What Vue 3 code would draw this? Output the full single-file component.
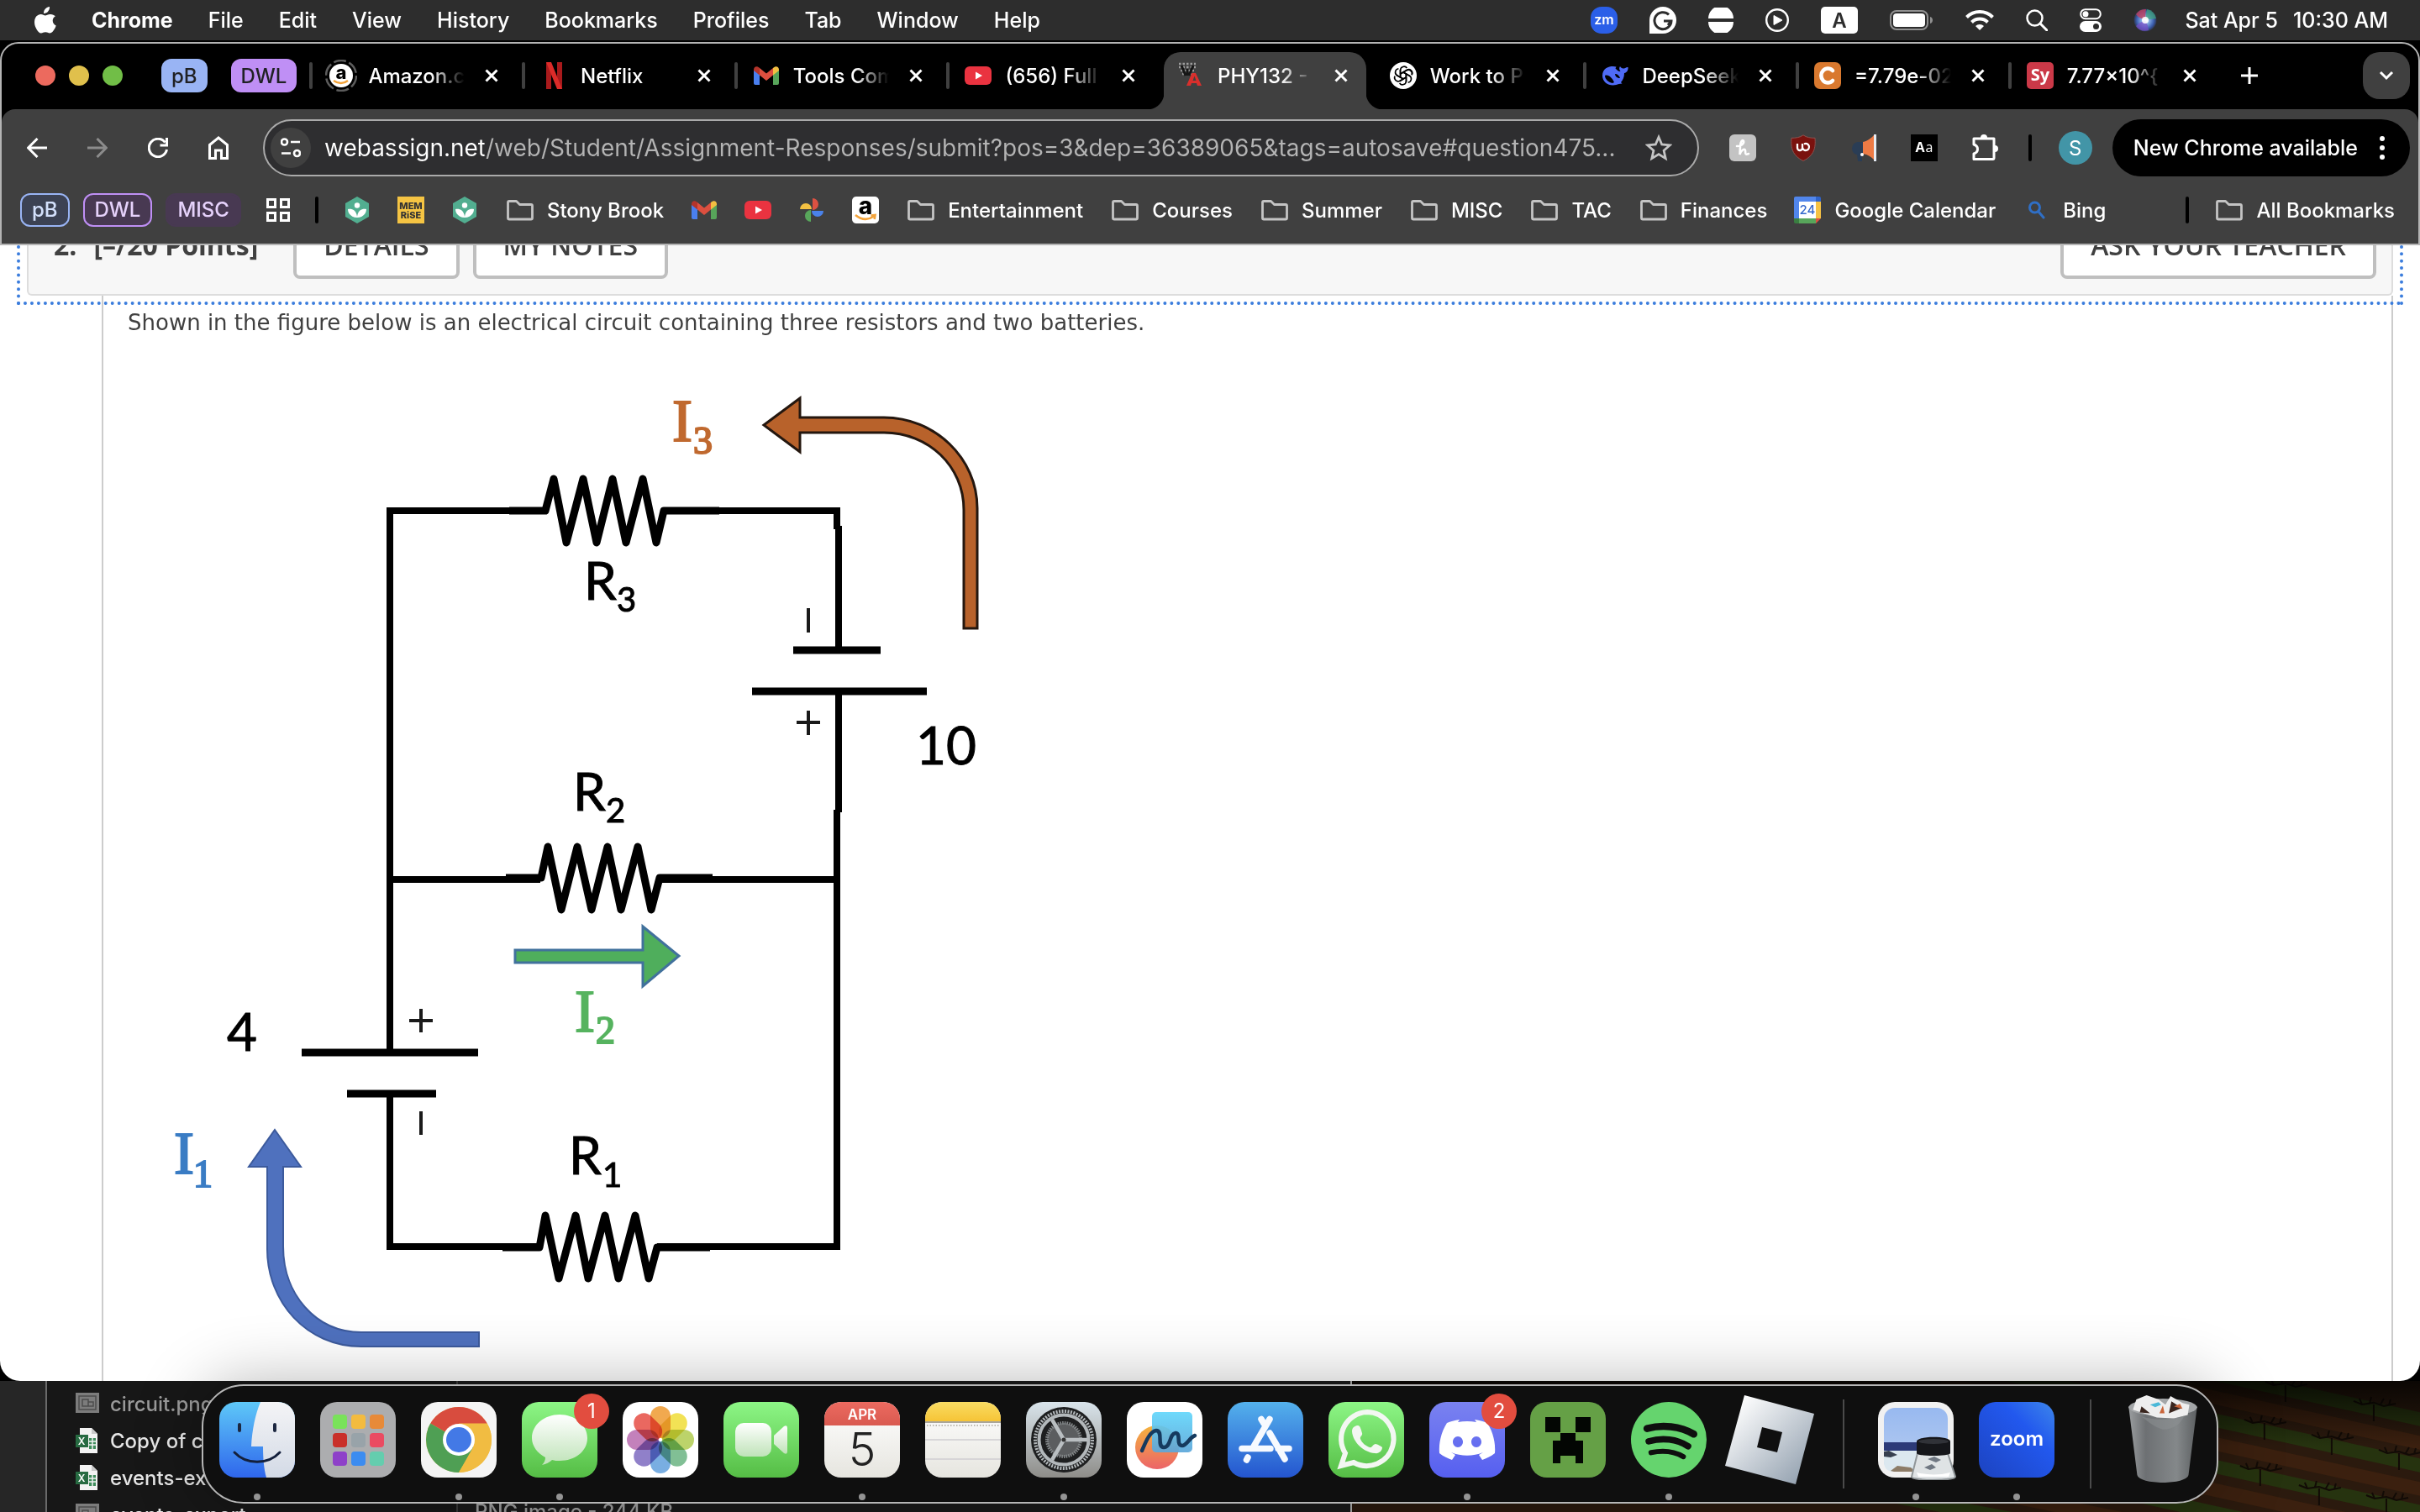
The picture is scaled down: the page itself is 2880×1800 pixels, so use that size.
<template>
  <div class="desktop">
    <!-- gradients used by the icons -->
    <svg class="gradients" aria-hidden="true">
      <defs>
        <linearGradient id="g-finder" x1="0" y1="0" x2="0" y2="1"><stop offset="0" stop-color="#5ec8f8" /><stop offset="1" stop-color="#2f66ec" /></linearGradient>
        <linearGradient id="g-face" x1="0" y1="0" x2="0" y2="1"><stop offset="0" stop-color="#f4f4f6" /><stop offset="1" stop-color="#d3dae6" /></linearGradient>
        <linearGradient id="g-green" x1="0" y1="0" x2="0" y2="1"><stop offset="0" stop-color="#8df686" /><stop offset="1" stop-color="#55bd45" /></linearGradient>
        <linearGradient id="g-bubble" x1="0" y1="0" x2="0" y2="1"><stop offset="0" stop-color="#ffffff" /><stop offset="1" stop-color="#bfe3b8" /></linearGradient>
        <linearGradient id="g-red" x1="0" y1="0" x2="0" y2="1"><stop offset="0" stop-color="#ec6a60" /><stop offset="1" stop-color="#d95a50" /></linearGradient>
        <linearGradient id="g-yellow" x1="0" y1="0" x2="0" y2="1"><stop offset="0" stop-color="#f9dc63" /><stop offset="1" stop-color="#f6c436" /></linearGradient>
        <linearGradient id="g-paper" x1="0" y1="0" x2="0" y2="1"><stop offset="0" stop-color="#ffffff" /><stop offset="1" stop-color="#e6e5df" /></linearGradient>
        <linearGradient id="g-steel" x1="0" y1="0" x2="0" y2="1"><stop offset="0" stop-color="#d9e4eb" /><stop offset="1" stop-color="#8e8d89" /></linearGradient>
        <linearGradient id="g-store" x1="0" y1="0" x2="0" y2="1"><stop offset="0" stop-color="#54b1ec" /><stop offset="1" stop-color="#2455cf" /></linearGradient>
        <linearGradient id="g-discord" x1="0" y1="0" x2="0" y2="1"><stop offset="0" stop-color="#7a82f0" /><stop offset="1" stop-color="#565ff0" /></linearGradient>
        <linearGradient id="g-free" x1="0" y1="0" x2="0" y2="1"><stop offset="0" stop-color="#f4b33e" /><stop offset="1" stop-color="#ec6468" /></linearGradient>
        <linearGradient id="g-sheet" x1="0" y1="0" x2="0" y2="1"><stop offset="0" stop-color="#62d6fb" /><stop offset="1" stop-color="#5ba6d9" /></linearGradient>
        <linearGradient id="g-roblox" x1="0" y1="0" x2="1" y2="1"><stop offset="0.1" stop-color="#ffffff" /><stop offset="1" stop-color="#8998a8" /></linearGradient>
        <linearGradient id="g-zoom" x1="1" y1="0" x2="0" y2="1"><stop offset="0" stop-color="#3d86ea" /><stop offset="0.35" stop-color="#2258ee" /><stop offset="1" stop-color="#1c43c0" /></linearGradient>
        <linearGradient id="g-sky" x1="0" y1="0" x2="0" y2="1"><stop offset="0" stop-color="#98b9f0" /><stop offset="1" stop-color="#b7cdf0" /></linearGradient>
        <linearGradient id="g-can" x1="0" y1="0" x2="1" y2="0"><stop offset="0" stop-color="#9a9d9f" /><stop offset="0.25" stop-color="#6d7073" /><stop offset="0.7" stop-color="#84888a" /><stop offset="1" stop-color="#5d6062" /></linearGradient>
        <linearGradient id="g-dusk" x1="0" y1="0" x2="0" y2="1"><stop offset="0" stop-color="#000" stop-opacity=".75" /><stop offset="0.5" stop-color="#000" stop-opacity="0" /></linearGradient>
        <radialGradient id="g-siri"><stop offset="0" stop-color="#ffffff" /><stop offset="0.3" stop-color="#8fb6e8" /><stop offset="0.75" stop-color="#3c5fb0" /><stop offset="1" stop-color="#2d3550" /></radialGradient>
      </defs>
    </svg>

    <!-- shared icon shapes -->
    <svg class="sprite" aria-hidden="true">
      <!-- menu bar -->
      <symbol id="i-apple" viewBox="0 0 26 32">
        <path fill="#fff" d="M18 0c.3 2.200-.6 4.200-1.900 5.700-1.300 1.400-3.200 2.400-5 2.200-.3-2.100.7-4.200 1.900-5.500C14.300 1 16.400.1 18 0zM24.900 11.200c-2 1.200-3.200 3-3.200 5.300 0 2.700 1.600 4.900 4 5.900-.6 1.800-1.400 3.500-2.500 5.100-1.300 1.900-2.700 3.900-4.900 3.900-2.100 0-2.700-1.200-5.200-1.200s-3.200 1.200-5.200 1.200c-2.100 0-3.600-2.100-5-4C1 24.500-.3 20.900.1 17.200.5 12.600 3.500 9 7.600 9c2.200 0 4 1.400 5.300 1.400S16.500 8.800 19.100 9c2.400.1 4.500 1.100 5.800 2.200z" />
      </symbol>
      <symbol id="i-zm" viewBox="0 0 32 32"><rect width="32" height="32" rx="13" fill="#2b5fe8" /></symbol>
      <symbol id="i-grammarly" viewBox="0 0 32 32"><path fill="#fff" d="M16 0a16 16 0 0 1 0 32H0V16A16 16 0 0 1 16 0z" /><path fill="none" stroke="#2d2d2d" stroke-width="3" d="M23 9.500A10 10 0 1 0 26 17h-9M26 17l-4 5" /></symbol>
      <symbol id="i-half" viewBox="0 0 30 30"><path fill="#fff" d="M0 13a15 15 0 0 1 30 0zM0 17a15 15 0 0 0 30 0z" /></symbol>
      <symbol id="i-play" viewBox="0 0 28 28"><circle cx="14" cy="14" r="12.800" fill="none" stroke="#fff" stroke-width="2.400" /><path fill="#fff" d="M10 8.500v11l10-5.500z" stroke="#fff" stroke-linejoin="round" /></symbol>
      <symbol id="i-a" viewBox="0 0 44 32"><rect width="44" height="32" rx="5" fill="#fff" /></symbol>
      <symbol id="i-battery" viewBox="0 0 52 24"><rect x="1" y="1" width="44" height="22" rx="7" fill="none" stroke="#909090" stroke-width="2" /><rect x="4" y="4" width="38" height="16" rx="4" fill="#fff" /><path fill="#909090" d="M48 8c4 1 4 7 0 8z" /></symbol>
      <symbol id="i-wifi" viewBox="0 0 34 26"><g fill="none" stroke="#fff" stroke-width="4"><path d="M1.500 9.500a22 22 0 0 1 31 0" /><path d="M7.500 15.500a13.500 13.500 0 0 1 19 0" /></g><path fill="#fff" d="M17 25l-5-5a7 7 0 0 1 10 0z" /></symbol>
      <symbol id="i-search" viewBox="0 0 26 26"><circle cx="10.500" cy="10.500" r="9" fill="none" stroke="#fff" stroke-width="2.500" /><path d="M17 17l8 8" stroke="#fff" stroke-width="3" stroke-linecap="round" /></symbol>
      <symbol id="i-control" viewBox="0 0 26 28"><rect x="1.200" y="1.200" width="23.600" height="11" rx="5.500" fill="none" stroke="#fff" stroke-width="2" /><circle cx="7" cy="6.700" r="3.500" fill="#fff" /><path fill="#fff" fill-rule="evenodd" d="M6.500 15h13a6.500 6.500 0 0 1 0 13h-13a6.500 6.500 0 0 1 0-13zM19.500 18a3.500 3.500 0 1 0 0 7 3.500 3.500 0 0 0 0-7z" /></symbol>
      <symbol id="i-siri" viewBox="0 0 28 28"><circle cx="14" cy="14" r="13.500" fill="url(#g-siri)" /><path d="M3 7a13 13 0 0 1 12-6c-1 5-1 9 0 12C10 13 6 11 3 7z" fill="#c2405e" opacity=".8" /><path d="M16 1a13 13 0 0 1 11 11c-5 1-9 1-12 1 0-4 0-8 1-12z" fill="#3fa27c" opacity=".75" /><path d="M3 21c4-4 8-6 11-7 2 4 4 8 4 12-6 2-12 0-15-5z" fill="#7a4fc8" opacity=".7" /><circle cx="14" cy="14" r="4" fill="#fff" opacity=".9" /></symbol>

      <!-- site icons -->
      <symbol id="i-amazon-ring" viewBox="0 0 38 38"><circle cx="19" cy="19" r="18" fill="none" stroke="#5c5c5c" stroke-width="2.500" stroke-dasharray="15 3.800" /><circle cx="19" cy="19" r="14" fill="#fff" /><path d="M10 25q9 6 17 0" fill="none" stroke="#f3a33a" stroke-width="2.500" /></symbol>
      <symbol id="i-amazon" viewBox="0 0 32 32"><rect width="32" height="32" rx="5" fill="#fff" /><path d="M4 22q11 9 22 1.500M22.500 22.500l5-.5-.8 5" fill="none" stroke="#f3a33a" stroke-width="2.600" /></symbol>
      <symbol id="i-netflix" viewBox="0 0 32 32"><path fill="#a91a1c" d="M7 0h6v32H7zM20 0h6v32h-6z" /><path fill="#dc2b29" d="M7 0h6l13 32h-6z" /></symbol>
      <symbol id="i-gmail" viewBox="0 0 32 32"><path fill="#4a7fee" d="M1 10h7v17H3a2 2 0 0 1-2-2z" /><path fill="#57a55a" d="M24 10h7v15a2 2 0 0 1-2 2h-5z" /><path fill="#dc4f3f" d="M8 7l8 6.500L24 7v8.500L16 22l-8-6.500z" /><path fill="#b3342b" d="M1 9c0-4 4-5 7-2v8.500L1 10z" /><path fill="#f2bf42" d="M31 9c0-4-4-5-7-2v8.500L31 10z" /></symbol>
      <symbol id="i-youtube" viewBox="0 0 32 32"><rect y="5" width="32" height="22" rx="6" fill="#ea3340" /><path fill="#fff" d="M13 11.500v9l8-4.500z" /></symbol>
      <symbol id="i-wa" viewBox="0 0 32 32"><path d="M2 2h20M2 6h20M4 10h16M6 14h12" stroke="#9c9c9c" stroke-width="2.500" stroke-dasharray="2.500 2" /><path d="M5 4l5 12M19 4l-5 12M12 8v8" stroke="#161616" stroke-width="3" /><path fill="#d92f2c" fill-rule="evenodd" d="M11 28l6.500-15h4.500L29 28h-5l-1-3h-6l-1 3zM18.500 22h4l-2-5.500z" /></symbol>
      <symbol id="i-gpt" viewBox="0 0 32 32"><circle cx="16" cy="16" r="16" fill="#fff" /><g fill="none" stroke="#000" stroke-width="1.600" stroke-linejoin="round"><path id="knot" d="M12.600 14V9.500a4.300 4.300 0 0 1 7.800-2.500M15.800 12l4.600-2.700a4.300 4.300 0 0 1 6 5.500M12.600 14v4l3.400 2" /><path d="M12.600 14V9.500a4.300 4.300 0 0 1 7.800-2.500M15.800 12l4.600-2.700M12.600 14v4l3.400 2" transform="rotate(60 16 16)" /><path d="M12.600 14V9.500a4.300 4.300 0 0 1 7.800-2.500M15.800 12l4.600-2.700M12.600 14v4l3.400 2" transform="rotate(120 16 16)" /><path d="M12.600 14V9.500a4.300 4.300 0 0 1 7.800-2.500M15.800 12l4.600-2.700M12.600 14v4l3.400 2" transform="rotate(180 16 16)" /><path d="M12.600 14V9.500a4.300 4.300 0 0 1 7.800-2.500M15.800 12l4.600-2.700M12.600 14v4l3.400 2" transform="rotate(240 16 16)" /><path d="M12.600 14V9.500a4.300 4.300 0 0 1 7.800-2.500M15.800 12l4.600-2.700M12.600 14v4l3.400 2" transform="rotate(300 16 16)" /></g></symbol>
      <symbol id="i-deepseek" viewBox="0 0 32 32"><path fill="#4f6bf6" d="M31.500 6c-2-.5-3 1-5 1.500C24.500 8 23 6.500 22 5c-1.500 2-1 4 .5 6-2 .5-4-1.500-6-3.500l1-2C13 4 1 5 1 16c0 7 6 11.500 12.500 11.500 3 0 5-1 7-1.500l4-.5-1.500-1.500c2.500-3 4-6 4-11 3-.5 5-3.500 4.500-7z" /><path fill="#000" d="M4 16c4-2 9 3 11 8l-2 1C8 24 4 20 4 16zM16 14c3 0 5 2 6 5-3 0-6-2-6-5z" /></symbol>
      <symbol id="i-c" viewBox="0 0 32 32"><rect width="32" height="32" rx="7" fill="#d9792f" /><path d="M22 10a8 8.500 0 1 0 0 12" fill="none" stroke="#fff" stroke-width="4.600" stroke-linecap="round" /></symbol>
      <symbol id="i-sy" viewBox="0 0 32 32"><rect width="32" height="32" rx="5" fill="#cb3948" /></symbol>
      <symbol id="i-folder" viewBox="0 0 32 32"><path fill="none" stroke="#c4c4c4" stroke-width="2.800" stroke-linejoin="round" d="M1.500 7q0-1.500 1.500-1.500h8.500l4 4H29q1.500 0 1.500 1.500v14.500q0 1.500-1.500 1.500H3q-1.500 0-1.500-1.500z" /></symbol>
      <symbol id="i-leaf" viewBox="0 0 32 32"><path fill="#52ae90" d="M16 0l14 8v16l-14 8-14-8V8z" /><circle cx="16" cy="10.500" r="3.200" fill="#fff" /><path fill="#fff" d="M5 15c6-1 10 2 11 9 1-7 5-10 11-9 0 6-5 10-11 10S5 21 5 15z" /></symbol>
      <symbol id="i-memrise" viewBox="0 0 32 32"><rect width="32" height="32" fill="#f5c443" /></symbol>
      <symbol id="i-photos" viewBox="0 0 32 32"><path fill="#f3c042" d="M2 15a7 7 0 0 1 14 0z" /><path fill="#dc5142" d="M17 2a7 7 0 0 1 0 14z" /><path fill="#4a82ea" d="M30 17a7 7 0 0 1-14 0z" /><path fill="#58a65b" d="M15 30a7 7 0 0 1 0-14z" /></symbol>
      <symbol id="i-gcal" viewBox="0 0 32 32"><path fill="#5186ec" d="M2 0h24v6H6v20H0V2a2 2 0 0 1 2-2z" /><path fill="#2f63c9" d="M26 0h4a2 2 0 0 1 2 2v4h-6z" /><path fill="#f5c244" d="M26 6h6v20h-6z" /><path fill="#58a65b" d="M6 26h20v6H6z" /><path fill="#3a7e41" d="M0 26h6v6H2a2 2 0 0 1-2-2z" /><path fill="#dc5142" d="M26 26h6l-6 6z" /><path fill="#fff" d="M6 6h20v20H6z" /></symbol>
      <symbol id="i-bing" viewBox="0 0 32 32"><circle cx="14.500" cy="13" r="6" fill="none" stroke="#2f6fc6" stroke-width="3" /><path d="M19 18l6 7" stroke="#2f6fc6" stroke-width="3" stroke-linecap="round" /></symbol>

      <!-- extensions -->
      <symbol id="i-honey" viewBox="0 0 32 32"><rect width="32" height="32" rx="6" fill="#c3c3c3" /><path d="M9 14c5 0 9-3 8-6s-4 1-4 6l-.5 10c1-5 6-8 6.500-5s-1 6 4 4" fill="none" stroke="#fff" stroke-width="2.600" stroke-linecap="round" /></symbol>
      <symbol id="i-ublock" viewBox="0 0 32 32"><path fill="#7a120e" stroke="#8d5350" d="M16 .8c4 3 9 3.500 14 3.500C31 16 29 25 16 31.500 3 25 1 16 2 4.300c5 0 10-.5 14-3.500z" /><path fill="none" stroke="#fff" stroke-width="2.300" d="M9 11v5a3 3 0 0 0 6 0v-5M15 15a4 4 0 1 0 2-3.500" /></symbol>
      <symbol id="i-horn" viewBox="0 0 32 32"><path fill="#2a3d55" d="M9 9h7v15h-2v8H9l-1-8C0 23 0 10 9 9z" /><path fill="#ee7b45" d="M15 9c6-1 10-5 13-8v29c-3-3-7-6-13-7z" /><path fill="#e6ecf4" d="M28 0h3v32h-3z" /><circle cx="14" cy="24" r="2" fill="#fff" /></symbol>
      <symbol id="i-aa" viewBox="0 0 32 32"><rect width="32" height="32" fill="#000" /></symbol>
      <symbol id="i-puzzle" viewBox="0 0 32 32"><path fill="none" stroke="#fff" stroke-width="3" stroke-linejoin="round" d="M3 5h24v23q0 1.500-1.500 1.500H3V23c6-2 6-9 0-11z" /><path fill="#fff" d="M11 4a4 4 0 0 1 8 0zM28 13a4 4 0 0 1 0 8z" /></symbol>

      <!-- dock -->
      <symbol id="d-finder" viewBox="0 0 90 90"><rect width="90" height="90" rx="20" fill="url(#g-finder)" /><path fill="url(#g-face)" d="M49 0h21a20 20 0 0 1 20 20v50a20 20 0 0 1-20 20H56c-3-10-4-24-4-37H38C39 33 43 14 49 0z" /><path d="M24 27v7M66 27v7" stroke="#1c2740" stroke-width="4" stroke-linecap="round" /><path d="M18 60c14 15 40 15 54 0" fill="none" stroke="#14203c" stroke-width="3" stroke-linecap="round" /></symbol>
      <symbol id="d-launch" viewBox="0 0 90 90"><rect width="90" height="90" rx="20" fill="#acadaf" /><rect x="15" y="15" width="17" height="17" rx="4" fill="#79e25a" /><rect x="37" y="15" width="17" height="17" rx="4" fill="#f3bb3f" /><rect x="59" y="15" width="17" height="17" rx="4" fill="#e78a39" /><rect x="15" y="37" width="17" height="17" rx="4" fill="#c9302a" /><rect x="37" y="37" width="17" height="17" rx="4" fill="#98a3a9" /><rect x="59" y="37" width="17" height="17" rx="4" fill="#ea4b62" /><rect x="15" y="59" width="17" height="17" rx="4" fill="#8e41c9" /><rect x="37" y="59" width="17" height="17" rx="4" fill="#3c8cf0" /><rect x="59" y="59" width="17" height="17" rx="4" fill="#64cdae" /></symbol>
      <symbol id="d-chrome" viewBox="0 0 90 90"><rect width="90" height="90" rx="20" fill="#f4f4f4" /><circle cx="45" cy="45" r="39" fill="#f1bc42" /><path fill="#d84c3e" d="M45 45L11.200 25.500A39 39 0 0 1 78.800 25.500z" /><path fill="#4f9f54" d="M45 45L11.200 25.500A39 39 0 0 0 45 84l18-30z" /><path fill="#f1bc42" d="M45 84a39 39 0 0 0 33.800-58.500H45L62 54z" /><circle cx="45" cy="45" r="19" fill="#fff" /><circle cx="45" cy="45" r="15" fill="#4379e6" /></symbol>
      <symbol id="d-messages" viewBox="0 0 90 90"><rect width="90" height="90" rx="20" fill="url(#g-green)" /><path fill="url(#g-bubble)" d="M45 15c18 0 33 12 33 28S63 70 45 70c-3 0-6 0-9-1-3 3-7 5-12 6 3-3 4-6 4-9-9-5-16-13-16-23 0-16 15-28 33-28z" /></symbol>
      <symbol id="d-photos" viewBox="0 0 90 90">
        <rect width="90" height="90" rx="20" fill="#fff" />
        <g opacity=".9">
          <rect v-for="(c, i) in petals" :key="c" class="petal" x="33" y="5" width="24" height="38" rx="12" :fill="c" :transform="`rotate(${i * 45} 45 45)`" />
        </g>
      </symbol>
      <symbol id="d-facetime" viewBox="0 0 90 90"><rect width="90" height="90" rx="20" fill="url(#g-green)" /><rect x="14" y="25" width="43" height="40" rx="10" fill="url(#g-bubble)" /><path fill="url(#g-bubble)" d="M60 40l12-11q4-2 4 2v28q0 4-4 2L60 50z" /></symbol>
      <symbol id="d-calendar" viewBox="0 0 90 90"><rect width="90" height="90" rx="20" fill="url(#g-paper)" /><path fill="url(#g-red)" d="M0 28v-8A20 20 0 0 1 20 0h50a20 20 0 0 1 20 20v8z" /></symbol>
      <symbol id="d-notes" viewBox="0 0 90 90"><rect width="90" height="90" rx="20" fill="url(#g-paper)" /><path fill="url(#g-yellow)" d="M0 23v-3A20 20 0 0 1 20 0h50a20 20 0 0 1 20 20v3z" /><path d="M0 24h90" stroke="#a9a59a" stroke-width="2" /><path d="M2 28h86" stroke="#bdbab2" stroke-width="2" stroke-dasharray="1.500 2" /><path d="M0 45h90M0 68h90" stroke="#cfced2" stroke-width="1.500" /></symbol>
      <symbol id="d-settings" viewBox="0 0 90 90"><rect width="90" height="90" rx="20" fill="url(#g-steel)" /><circle cx="45" cy="45" r="39" fill="#1e1f20" /><circle cx="45" cy="45" r="34" fill="none" stroke="#b3b8bb" stroke-width="4" stroke-dasharray="2 1.500" /><circle cx="45" cy="45" r="29.500" fill="none" stroke="#b3b8bb" stroke-width="4" /><circle cx="45" cy="45" r="20" fill="#5b5d5f" stroke="#85898b" stroke-width="4" stroke-dasharray="1.500 1.200" /><path d="M45 45h28M45 45L31 21M45 45L31 69" stroke="#b9bec1" stroke-width="4.500" /><circle cx="45" cy="45" r="2.500" fill="#333" /></symbol>
      <symbol id="d-freeform" viewBox="0 0 90 90"><rect width="90" height="90" rx="20" fill="#fff" /><circle cx="36" cy="54" r="26" fill="url(#g-free)" /><rect x="30" y="12" width="48" height="48" rx="5" fill="url(#g-sheet)" opacity=".92" /><path d="M18 58c4-9 9-23 17-24 9 0 0 20 9 20s6-16 14-17c7 0 0 15 8 15 5 0 9-10 15-12" fill="none" stroke="#163a5e" stroke-width="4.500" stroke-linecap="round" /></symbol>
      <symbol id="d-store" viewBox="0 0 90 90"><rect width="90" height="90" rx="20" fill="url(#g-store)" /><g stroke="#f7faff" stroke-width="7.500" stroke-linecap="round"><path d="M50 20.500L31 53M40 20.500l3 5M50 37l18 31M24 66l-1.500 3M17 55.500h34M60 55.500h13" /></g></symbol>
      <symbol id="d-whatsapp" viewBox="0 0 90 90"><rect width="90" height="90" rx="20" fill="url(#g-green)" /><path fill="none" stroke="#f3f7f2" stroke-width="6" d="M46 12a32 32 0 1 1-16 60l-15 4 5-15A32 32 0 0 1 46 12z" /><path fill="#f3f7f2" d="M28 35c0-5 4-7 7-7 3 0 4 6 5 9 1 3-3 4-2 7 2 5 6 8 11 10 3 1 4-4 7-4 2 0 7 3 8 4 0 4-4 8-9 7-13-1-26-13-27-26z" /></symbol>
      <symbol id="d-discord" viewBox="0 0 90 90"><rect width="90" height="90" rx="20" fill="url(#g-discord)" /><path fill="#fff" fill-rule="evenodd" d="M36 21l-2 3c7-1.500 15-1.500 22 0l-2-3c6 1 11 2 15 4 7 11 10 24 9 36-5 4-10 6-15 8l-4-6 5-3c-12 5-26 5-38 0l5 3-4 6c-5-2-10-4-15-8-1-12 2-25 9-36 4-2 9-3 15-4zM34 41c-3.500 0-6 3-6 6.500s2.500 6.500 6 6.500 6-3 6-6.500-2.500-6.500-6-6.500zm22 0c-3.500 0-6 3-6 6.500s2.500 6.500 6 6.500 6-3 6-6.500-2.500-6.500-6-6.500z" /></symbol>
      <symbol id="d-creeper" viewBox="0 0 90 90"><rect width="90" height="90" rx="20" fill="#65a046" /><path fill="#030603" d="M18 18h18v18H18zM54 18h18v18H54zM36 37h18v9h9v27h-9v-9H36v9h-9V46h9z" /></symbol>
      <symbol id="d-spotify" viewBox="-2 -2 94 94"><circle cx="45" cy="45" r="47" fill="#65d46e" /><g fill="none" stroke="#0f0f0f" stroke-linecap="round"><path d="M18 31c19-5 41-3 58 7" stroke-width="9" /><path d="M20 47c17-5 35-3 49 6" stroke-width="8" /><path d="M23 61c14-3 28-2 40 5" stroke-width="6.500" /></g></symbol>
      <symbol id="d-roblox" viewBox="0 0 106 108"><path fill="url(#g-roblox)" fill-rule="evenodd" d="M23 1l83 22-22 84L0 85zM44 39l-6 24 24 6 6-24z" /></symbol>
      <symbol id="d-preview" viewBox="0 0 96 96"><rect x="3" y="3" width="90" height="90" rx="20" fill="#f1f1f1" /><rect x="10" y="10" width="76" height="76" rx="13" fill="url(#g-sky)" /><path fill="#2c3a78" d="M10 51h76v12H10z" /><path fill="#dce8ef" d="M10 61h76v14q0 11-12 11H22q-12 0-12-12z" /><path fill="#38404f" d="M10 62l6-1 10 5-8 3-8-1z" /><path fill="#8d7c67" d="M18 85l8-6 16 2 6 5H22z" /><path fill="#dfe3e5" stroke="#909699" stroke-width="2" d="M50 64h36l9 28c0 5-52 5-52 0z" /><path fill="#fff" d="M49 87q20 5 40 0l-2 5H51z" /><path fill="#6f7782" d="M62 71l8-3 8 4-6 3zM58 81l9-4 5 4-7 3z" /><path fill="#15161a" d="M49 50c0-7 40-7 40 0v14c0 4-40 4-40 0z" /><ellipse cx="69" cy="50" rx="18" ry="3" fill="#303238" /></symbol>
      <symbol id="d-zoom" viewBox="0 0 90 90"><rect width="90" height="90" rx="20" fill="url(#g-zoom)" /></symbol>
      <symbol id="d-trash" viewBox="0 0 90 106"><path fill="url(#g-can)" d="M5 14h80L75 94c-2 12-58 12-60 0z" /><ellipse cx="45" cy="15" rx="40" ry="10" fill="#a3a6a8" /><path fill="#eee" d="M10 18l4-12 12-5 14 5 8 6 6-10 14 8 8 2-2 12-16 4-20-1z" /><path fill="#39251e" d="M20 14l10 8-12-1zM52 22l3-14 12 8z" /><path fill="#4ab8d8" d="M30 12l10-3 3 3-7 3z" /><path fill="#c9653a" d="M41 22l4-9 2 9zM58 14l7-3 3 6z" /><path fill="#8d9193" d="M20 26c20 5 35 4 50-1-4 9-12 16-25 16-8-2-16-8-25-15z" opacity=".5" /></symbol>
      <symbol id="f-excel" viewBox="0 0 28 30"><path fill="#f3f3f3" d="M5 0h14l7 7v23H5z" /><path fill="#c9c9c9" d="M19 0l7 7h-7z" /><path fill="#3f8d5c" d="M16 12h8v13h-8z" /><path d="M16 16h8M16 20h8M20 12v13" stroke="#f3f3f3" stroke-width="1.500" /><rect y="8" width="15" height="15" fill="#276b42" /></symbol>
      <symbol id="f-image" viewBox="0 0 28 26"><rect width="28" height="24" fill="#7c7c7c" /><path fill="none" stroke="#4c4c4c" stroke-width="1.500" d="M4 4h20v16H4zM8 8h7v8H8zM15 11h6v5h-6z" /></symbol>
    </svg>

    <header class="menubar">
      <nav class="menus">
        <button class="apple" aria-label="Apple"><Icon name="i-apple" /></button>
        <button v-for="m in menus" :key="m" :class="{ bold: m === 'Chrome' }">{{ m }}</button>
      </nav>
      <div class="status">
        <Icon v-for="s in statusIcons" :key="s.id" :name="s.id" :width="s.w" :height="s.h" />
        <span class="clock"><span>Sat Apr 5</span><span>10:30 AM</span></span>
      </div>
    </header>

    <main class="browser">
      <div class="browser-top">
        <div class="tabstrip">
          <div class="lights"><i class="red"></i><i class="amber"></i><i class="lime"></i></div>
          <button class="group blue">pB</button>
          <button class="group purple">DWL</button>
          <div class="tabs">
            <div v-for="(t, i) in tabs" :key="t.title" class="tab" :class="{ active: t.active, plain: t.active || (i > 0 && tabs[i - 1].active) }">
              <Icon :name="t.icon" class="favicon" :class="{ ringed: t.icon === 'i-amazon-ring' }" />
              <span class="tab-title">{{ t.title }}</span>
              <button class="close" :aria-label="'Close ' + t.title">
                <svg viewBox="0 0 16 16"><path d="M1.500 1.500l13 13M14.500 1.500l-13 13" /></svg>
              </button>
            </div>
          </div>
          <button class="new-tab" aria-label="New tab"><svg viewBox="0 0 22 22"><path d="M11 1v20M1 11h20" /></svg></button>
          <button class="tab-search" aria-label="Search tabs"><svg viewBox="0 0 18 12"><path d="M2 2l7 7 7-7" /></svg></button>
        </div>

        <div class="toolbar">
          <button class="nav" aria-label="Back"><svg viewBox="0 0 24 24"><path d="M24 12H2M12.500 1L1.500 12l11 11" /></svg></button>
          <button class="nav dim" aria-label="Forward"><svg viewBox="0 0 24 24"><path d="M0 12h22M11.500 1l11 11-11 11" /></svg></button>
          <button class="nav" aria-label="Reload"><svg viewBox="0 0 24 24"><path d="M20.500 5.500A10.700 10.700 0 1 0 22.500 14M22.500 0v9h-8" /></svg></button>
          <button class="nav" aria-label="Home"><svg class="home" viewBox="0 0 24 28"><path d="M1.500 10.500L12 2l10.500 8.500v16h-7V17h-7v9.500h-7z" /></svg></button>
          <div class="omnibox">
            <span class="site-info">
              <svg viewBox="0 0 24 24"><circle cx="4.500" cy="5" r="3.500" /><path d="M12 5h11M1 18.500h11" /><circle cx="19.500" cy="18.500" r="3.500" /></svg>
            </span>
            <input v-model="url" aria-label="Address">
            <svg class="star" viewBox="0 0 30 30"><path d="M15 3l3.500 8.200 9 .8-6.800 6 2 8.800L15 22.200l-7.700 4.600 2-8.800L2.500 12l9-.8z" /></svg>
          </div>
          <div class="extensions">
            <Icon v-for="e in extensions" :key="e" :name="e" />
          </div>
          <i class="bar"></i>
          <button class="avatar">S</button>
          <button class="update">New Chrome available
            <svg viewBox="0 0 6 28"><circle cx="3" cy="3" r="3" /><circle cx="3" cy="14" r="3" /><circle cx="3" cy="25" r="3" /></svg>
          </button>
        </div>

        <nav class="bookmarks">
          <a href="#" class="chip chip-blue">pB</a>
          <a href="#" class="chip chip-purple">DWL</a>
          <a href="#" class="chip">MISC</a>
          <svg class="apps" viewBox="0 0 28 28"><path d="M1.500 1.500h9v9h-9zM17.500 1.500h9v9h-9zM1.500 17.500h9v9h-9zM17.500 17.500h9v9h-9z" /></svg>
          <i class="bar"></i>
          <div class="links">
            <a v-for="(b, i) in bookmarks" :key="i" href="#" :class="{ folder: b.icon === 'i-folder' }" :aria-label="b.label || b.name">
              <Icon :name="b.icon" class="link-icon" /><span v-if="b.name">{{ b.name }}</span>
            </a>
          </div>
          <i class="bar"></i>
          <a href="#" class="all"><Icon name="i-folder" class="link-icon" /><span>All Bookmarks</span></a>
        </nav>
      </div>

      <div class="page">
        <div class="question-focus">
          <div class="question-bar">
            <span class="points"><b>2.</b><b>[–/20 Points]</b></span>
            <button>DETAILS</button>
            <button>MY NOTES</button>
            <button class="ask">ASK YOUR TEACHER</button>
          </div>
        </div>
        <section class="question-body">
          <p>Shown in the figure below is an electrical circuit containing three resistors and two batteries.</p>
          <svg class="circuit" viewBox="152 440 1048 1180" role="img" aria-label="Electrical circuit">
            <g class="wire">
              <path d="M648 608H464V1253M791 608H996V630M998 626V774M998 823V967M996 964V1484H782M464 1302V1484H641M464 1047H643M786 1047H996" />
              <path class="zig" d="M606 608H649L659 570L674 646L694 570L710 646L729 570L745 646L765 570L781 646L790 608H856" />
              <path class="zig" d="M602 1045H644L652 1008L668 1083L687 1008L704 1083L723 1008L739 1083L759 1008L775 1083L785 1045H848" />
              <path class="zig" d="M598 1485H642L649 1447L665 1522L685 1447L700 1522L720 1447L736 1522L756 1447L772 1522L782 1485H845" />
              <path class="plate" d="M944 774H1048M895 823H1103M359 1253H569M413 1302H519" />
              <path class="sign" d="M962 724V753M962 846V875M948 860H976M501 1201V1229M487 1215H515M501 1323V1351" />
            </g>
            <path class="flow-orange" d="M909 506L952 474V497H1052C1112 497 1163 545 1163 605V748H1147V607C1147 555 1105 515 1052 515H952V538Z" />
            <path class="flow-green" d="M613 1131H765V1103L808 1138L765 1174V1146H613Z" />
            <path class="flow-blue" d="M327 1345L358 1389H337V1484C337 1540 375 1586 430 1586H570V1603H430C365 1603 318 1550 318 1487V1389H296Z" />
            <g class="label">
              <text x="695" y="714">R</text><text class="sub" x="734" y="728">3</text>
              <text x="682" y="965">R</text><text class="sub" x="721" y="979">2</text>
              <text x="677" y="1398">R</text><text class="sub" x="717" y="1413">1</text>
              <text x="1090" y="910">10</text>
              <text x="270" y="1251">4</text>
            </g>
            <g class="current">
              <g class="orange"><text x="800" y="525">I</text><text class="sub" x="825" y="540">3</text></g>
              <g class="green"><text x="684" y="1228">I</text><text class="sub" x="709" y="1242">2</text></g>
              <g class="blue"><text x="207" y="1397">I</text><text class="sub" x="230" y="1413">1</text></g>
            </g>
          </svg>
        </section>
      </div>
    </main>

    <div class="behind">
      <div class="sidebar"></div>
      <ul class="files">
        <li v-for="f in files" :key="f.name" :class="{ faded: f.faded }"><Icon :name="f.icon" class="file-icon" />{{ f.name }}</li>
      </ul>
      <div class="preview-pane">PNG image - 244 KB</div>
      <svg class="vineyard" viewBox="0 0 1270 156" preserveAspectRatio="xMaxYMax slice">
        <rect width="1270" height="156" fill="#2b1a0e" />
        <g fill="none" stroke-width="16">
          <path stroke="#26330f" d="M700 -80L1290 50M700 -25L1290 105M700 30L1290 160M700 85L1290 215M500 110L1290 260" />
          <path stroke="#3b200f" d="M700 -52L1290 78M700 3L1290 133M700 58L1290 188M600 100L1290 240" />
        </g>
        <g fill="none" stroke="#120b06" stroke-width="2">
          <path v-for="v in vines" :key="v.x + '-' + v.y" :transform="`translate(${v.x} ${v.y})`" d="M0 0v20M-24-4l10 4 14-2 12 4 14-3M-14 0l-3-7M-5-1l2-8M8 0l4-7M18 1l2-7" />
        </g>
        <rect width="1270" height="156" fill="url(#g-dusk)" />
      </svg>
    </div>

    <nav class="dock">
      <template v-for="(d, i) in dock" :key="i">
        <i v-if="d.sep" class="dock-sep"></i>
        <button v-else class="app" :class="d.kind" :aria-label="d.label">
          <Icon :name="d.icon" class="app-icon" />
          <span v-if="d.badge" class="badge">{{ d.badge }}</span>
          <span v-if="d.open" class="dot"></span>
        </button>
      </template>
    </nav>
  </div>
</template>

<script setup>
import { h, ref } from 'vue'

// lettering that sits on top of an icon's shape
const glyphs = {
  'i-zm': [{ t: 'zm', x: 16, y: 21, size: 16, weight: 600, fill: '#fff' }],
  'i-a': [{ t: 'A', x: 22, y: 25, size: 24, weight: 600, fill: '#2d2d2d' }],
  'i-amazon-ring': [{ t: 'a', x: 19, y: 23, size: 22, weight: 800, fill: '#000' }],
  'i-amazon': [{ t: 'a', x: 16, y: 21, size: 28, weight: 800, fill: '#000' }],
  'i-sy': [{ t: 'Sy', x: 16, y: 22, size: 20, weight: 700, fill: '#fff', font: 'Open Sans' }],
  'i-memrise': [
    { t: 'MEM', x: 16, y: 15, size: 11, weight: 800, fill: '#333' },
    { t: 'RiSE', x: 16, y: 26, size: 11, weight: 800, fill: '#333' }
  ],
  'i-gcal': [{ t: '24', x: 16, y: 21, size: 15, weight: 500, fill: '#3568cc' }],
  'i-aa': [
    { t: 'A', x: 11, y: 21, size: 16, weight: 700, fill: '#fff', font: 'Open Sans' },
    { t: 'a', x: 22, y: 21, size: 16, weight: 400, fill: '#fff', font: 'Open Sans' }
  ],
  'd-calendar': [
    { t: 'APR', x: 45, y: 21, size: 17, weight: 600, fill: '#fff' },
    { t: '5', x: 45, y: 76, size: 55, weight: 300, fill: '#222' }
  ],
  'd-zoom': [{ t: 'zoom', x: 45, y: 52, size: 24, weight: 600, fill: '#fff' }],
  'f-excel': [{ t: 'X', x: 7, y: 20, size: 12, weight: 600, fill: '#fff' }]
}

const Icon = (props) => h('svg', null, [
  h('use', { href: '#' + props.name }),
  ...(glyphs[props.name] || []).map((g) => h('text', {
    x: g.x,
    y: g.y,
    fill: g.fill,
    'text-anchor': 'middle',
    'font-family': (g.font || 'Inter') + ', sans-serif',
    'font-size': g.size,
    'font-weight': g.weight
  }, g.t))
])
Icon.props = ['name']

const url = ref('webassign.net/web/Student/Assignment-Responses/submit?pos=3&dep=36389065&tags=autosave#question475...')

const menus = ['Chrome', 'File', 'Edit', 'View', 'History', 'Bookmarks', 'Profiles', 'Tab', 'Window', 'Help']

const statusIcons = [
  { id: 'i-zm', w: 32, h: 32 },
  { id: 'i-grammarly', w: 32, h: 32 },
  { id: 'i-half', w: 30, h: 30 },
  { id: 'i-play', w: 28, h: 28 },
  { id: 'i-a', w: 44, h: 32 },
  { id: 'i-battery', w: 52, h: 24 },
  { id: 'i-wifi', w: 34, h: 26 },
  { id: 'i-search', w: 26, h: 26 },
  { id: 'i-control', w: 26, h: 28 },
  { id: 'i-siri', w: 28, h: 28 }
]

const tabs = [
  { title: 'Amazon.com', icon: 'i-amazon-ring' },
  { title: 'Netflix', icon: 'i-netflix' },
  { title: 'Tools Com', icon: 'i-gmail' },
  { title: '(656) Full', icon: 'i-youtube' },
  { title: 'PHY132 - ', icon: 'i-wa', active: true },
  { title: 'Work to P', icon: 'i-gpt' },
  { title: 'DeepSeek', icon: 'i-deepseek' },
  { title: '=7.79e-02', icon: 'i-c' },
  { title: '7.77×10^{', icon: 'i-sy' }
]

const extensions = ['i-honey', 'i-ublock', 'i-horn', 'i-aa', 'i-puzzle']

const bookmarks = [
  { icon: 'i-leaf', label: 'Leaf' },
  { icon: 'i-memrise', label: 'Memrise' },
  { icon: 'i-leaf', label: 'Leaf' },
  { icon: 'i-folder', name: 'Stony Brook' },
  { icon: 'i-gmail', label: 'Gmail' },
  { icon: 'i-youtube', label: 'YouTube' },
  { icon: 'i-photos', label: 'Photos' },
  { icon: 'i-amazon', label: 'Amazon' },
  { icon: 'i-folder', name: 'Entertainment' },
  { icon: 'i-folder', name: 'Courses' },
  { icon: 'i-folder', name: 'Summer' },
  { icon: 'i-folder', name: 'MISC' },
  { icon: 'i-folder', name: 'TAC' },
  { icon: 'i-folder', name: 'Finances' },
  { icon: 'i-gcal', name: 'Google Calendar' },
  { icon: 'i-bing', name: 'Bing' }
]

const files = [
  { name: 'circuit.png', icon: 'f-image', faded: true },
  { name: 'Copy of c', icon: 'f-excel' },
  { name: 'events-ex', icon: 'f-excel' },
  { name: 'events_export', icon: 'f-image' }
]

const petals = ['#f0a03c', '#f1df43', '#b5cf5a', '#74b98a', '#6ba6df', '#8573c4', '#bd74b4', '#e8584f']

const vines = [
  { x: 1085, y: 50 }, { x: 1165, y: 68 }, { x: 1245, y: 86 },
  { x: 1110, y: 5 }, { x: 1215, y: 28 }, { x: 1080, y: 105 },
  { x: 1150, y: 128 }, { x: 1230, y: 140 }
]

const dock = [
  { icon: 'd-finder', label: 'Finder', open: true },
  { icon: 'd-launch', label: 'Launchpad' },
  { icon: 'd-chrome', label: 'Chrome', open: true },
  { icon: 'd-messages', label: 'Messages', badge: 1, open: true },
  { icon: 'd-photos', label: 'Photos' },
  { icon: 'd-facetime', label: 'FaceTime' },
  { icon: 'd-calendar', label: 'Calendar', open: true },
  { icon: 'd-notes', label: 'Notes' },
  { icon: 'd-settings', label: 'Settings', open: true },
  { icon: 'd-freeform', label: 'Freeform' },
  { icon: 'd-store', label: 'App Store' },
  { icon: 'd-whatsapp', label: 'WhatsApp' },
  { icon: 'd-discord', label: 'Discord', badge: 2, open: true },
  { icon: 'd-creeper', label: 'Minecraft' },
  { icon: 'd-spotify', label: 'Spotify', open: true },
  { icon: 'd-roblox', label: 'Roblox', kind: 'big' },
  { sep: true },
  { icon: 'd-preview', label: 'Preview', kind: 'wide', open: true },
  { icon: 'd-zoom', label: 'Zoom', open: true },
  { sep: true },
  { icon: 'd-trash', label: 'Trash', kind: 'big' }
]
</script>

<style>
body {
  background: #000;
  overflow: hidden;
}
</style>

<style scoped>
.desktop {
  position: relative;
  display: flex;
  flex-direction: column;
  height: 100vh;
  overflow: hidden;
  background: #000;
  color: #fff;
  font-family: Inter, "Liberation Sans", sans-serif;
  font-size: 24px;
  font-weight: 500;
}
.gradients {
  position: absolute;
  width: 0;
  height: 0;
}
.sprite {
  display: none;
}
button {
  padding: 0;
  border: none;
  background: none;
  color: inherit;
  font: inherit;
}
a {
  color: inherit;
  text-decoration: none;
}
svg {
  flex: none;
}

/* menu bar */
.menubar {
  display: flex;
  justify-content: space-between;
  align-items: center;
  flex: none;
  height: 48px;
  padding: 0 38px 0 41px;
  background: #2d2d2d;
  font-size: 25px;
  line-height: 30px;
}
.menus {
  display: flex;
  align-items: center;
  gap: 42px;
}
.menus .bold {
  font-weight: 700;
}
.apple svg {
  display: block;
  width: 26px;
  height: 32px;
}
.status {
  display: flex;
  align-items: center;
  gap: 38px;
}
.clock {
  display: flex;
  gap: 18px;
  margin-left: -5px;
}

/* browser window */
.browser {
  display: flex;
  flex-direction: column;
  flex: 1;
  min-height: 0;
  overflow: hidden;
  border-radius: 0 0 24px 24px;
}
.browser-top {
  flex: none;
  margin-top: 2px;
  border: 2px solid #b4b4b4;
  border-radius: 22px 22px 0 0;
  background: #000;
}
.tabstrip {
  display: flex;
  align-items: center;
  height: 76px;
  padding: 0 10px 2px 40px;
}
.lights {
  display: flex;
  gap: 16px;
  margin-right: 46px;
}
.lights i {
  width: 24px;
  height: 24px;
  border-radius: 50%;
}
.red { background: #ec6a5e; }
.amber { background: #e0c04c; }
.lime { background: #71be47; }
.group {
  height: 40px;
  padding: 0 12px;
  border-radius: 12px;
  color: #202124;
}
.group.blue {
  margin-right: 28px;
  background: #99b4f4;
}
.group.purple {
  margin-right: 15px;
  background: #bf8ff5;
}
.tabs {
  display: flex;
  align-self: stretch;
  flex: 0 1 2274px;
  min-width: 0;
  margin-bottom: -2px;
}
.tab {
  position: relative;
  display: flex;
  align-items: center;
  flex: 1 1 0;
  min-width: 0;
  padding: 0 28px 2px 22px;
}
.tab::before {
  content: "";
  position: absolute;
  left: 0;
  top: 22px;
  width: 4px;
  height: 32px;
  border-radius: 2px;
  background: #404040;
}
.tab.plain::before {
  display: none;
}
.tab.active {
  margin: 10px 6px 0;
  padding: 0 22px 12px 16px;
  border-radius: 20px 20px 0 0;
  background: #404040;
}
.tab.active::before,
.tab.active::after {
  content: "";
  display: block;
  position: absolute;
  top: auto;
  bottom: 0;
  width: 20px;
  height: 20px;
  border-radius: 0;
}
.tab.active::before {
  left: -20px;
  background: radial-gradient(circle at 0 0, #000 20px, #404040 21px);
}
.tab.active::after {
  right: -20px;
  background: radial-gradient(circle at 100% 0, #000 20px, #404040 21px);
}
.favicon {
  width: 32px;
  height: 32px;
  margin-right: 16px;
}
.favicon.ringed {
  width: 38px;
  height: 38px;
  margin: 0 13px 0 -3px;
}
.tab-title {
  flex: 1;
  min-width: 0;
  margin-right: 24px;
  overflow: hidden;
  white-space: nowrap;
  mask-image: linear-gradient(to right, #000 65%, transparent);
}
.close svg {
  display: block;
  width: 16px;
  height: 16px;
  stroke: #fff;
  stroke-width: 3;
}
.new-tab svg {
  display: block;
  width: 22px;
  height: 22px;
  margin-left: 24px;
  stroke: #fff;
  stroke-width: 3;
}
.tab-search {
  display: flex;
  align-items: center;
  justify-content: center;
  width: 56px;
  height: 56px;
  margin-left: auto;
  border-radius: 20px;
  background: #404040;
}
.tab-search svg {
  width: 18px;
  height: 12px;
  fill: none;
  stroke: #fff;
  stroke-width: 3;
}

.toolbar {
  display: flex;
  align-items: center;
  height: 68px;
  padding: 12px 10px 0 30px;
  border-radius: 16px 16px 0 0;
  background: #404040;
}
.nav {
  margin-right: 48px;
}
.nav svg {
  display: block;
  width: 24px;
  height: 24px;
  fill: none;
  stroke: #fff;
  stroke-width: 3;
}
.nav .home {
  height: 28px;
}
.nav.dim {
  opacity: .4;
}
.omnibox {
  display: flex;
  align-items: center;
  flex: 1;
  height: 64px;
  margin-left: -7px;
  padding: 0 30px 0 7px;
  border: 2px solid #aaa;
  border-radius: 34px;
  background: #2e2e30;
}
.site-info {
  display: flex;
  align-items: center;
  justify-content: center;
  width: 48px;
  height: 48px;
  margin-right: 16px;
  border-radius: 50%;
  background: #404040;
}
.site-info svg {
  width: 24px;
  height: 24px;
  fill: none;
  stroke: #fff;
  stroke-width: 2.600;
}
.omnibox input {
  flex: 1;
  min-width: 0;
  padding: 0;
  border: none;
  outline: none;
  background: linear-gradient(to right, #fff 190px, #b4b4b4 190px);
  background-clip: text;
  color: transparent;
  font: inherit;
  font-weight: 400;
  font-size: 28px;
}
.star {
  width: 32px;
  height: 32px;
  fill: none;
  stroke: #c4c4c4;
  stroke-width: 2.600;
}
.extensions {
  display: flex;
  gap: 40px;
  margin: 0 36px;
}
.extensions svg {
  width: 32px;
  height: 32px;
}
.bar {
  width: 4px;
  height: 32px;
  border-radius: 2px;
  background: #000;
}
.avatar {
  width: 40px;
  height: 40px;
  margin: 0 24px 0 32px;
  border-radius: 50%;
  background: #4295a7;
  font-weight: 400;
}
.update {
  display: flex;
  align-items: center;
  gap: 26px;
  height: 68px;
  padding: 0 30px 0 25px;
  border-radius: 34px;
  background: #000;
  font-size: 25px;
}
.update svg {
  width: 6px;
  height: 28px;
  fill: #fff;
}

.bookmarks {
  display: flex;
  align-items: center;
  height: 80px;
  padding: 0 28px 0 22px;
  background: #404040;
}
.chip {
  height: 36px;
  margin-right: 16px;
  padding: 0 12px;
  border: 2px solid #483952;
  border-radius: 12px;
  background: #483952;
  color: #e6d2fb;
  line-height: 36px;
}
.chip-blue {
  border-color: #99b4f4;
  background: #3c4253;
  color: #d3e0fb;
}
.chip-purple {
  border-color: #bf8ff5;
}
.apps {
  width: 28px;
  height: 28px;
  margin: 0 30px 0 14px;
  fill: none;
  stroke: #fff;
  stroke-width: 3;
}
.links {
  display: flex;
  gap: 32px;
  flex: 1;
  margin-left: 30px;
}
.links a,
.all {
  display: flex;
  align-items: center;
  gap: 16px;
  white-space: nowrap;
}
.links .folder {
  margin-left: 2px;
}
.link-icon {
  width: 32px;
  height: 32px;
}
.all {
  margin-left: 32px;
}

/* assignment page */
.page {
  display: flex;
  flex-direction: column;
  flex: 1;
  min-height: 0;
  overflow: hidden;
  background: #fff;
  color: #404040;
}
.question-focus {
  position: relative;
  flex: none;
  margin: 0 20px;
  padding: 0 8px 7px;
  border: 4px dotted #3b7ddd;
  border-top: none;
}
.question-bar {
  display: flex;
  align-items: flex-end;
  gap: 16px;
  height: 40px;
  padding: 0 18px 18px 30px;
  border: 2px solid #ddd;
  border-top: none;
  border-radius: 0 0 6px 6px;
  background: #f7f7f7;
  font-family: "Open Sans", sans-serif;
  font-size: 32px;
  line-height: 36px;
}
.points {
  display: flex;
  gap: 20px;
  margin-right: 26px;
  padding-bottom: 22px;
}
.question-bar button {
  flex: none;
  padding: 12px 32px 18px;
  border: 4px solid #bfbfbf;
  border-radius: 8px;
  background: #fff;
  font-weight: 600;
}
.question-bar .ask {
  margin-left: auto;
}
.question-body {
  flex: 1;
  margin: -11px 32px 0 121px;
  padding-left: 29px;
  border: solid #ccc;
  border-width: 0 2px;
}
.question-body p {
  margin: 0;
  padding-top: 14px;
  font-family: "DejaVu Sans", sans-serif;
  font-size: 26px;
  font-weight: 400;
  line-height: 36px;
}
.circuit {
  display: block;
  width: 1048px;
  height: 1180px;
  margin-top: 38px;
}
.wire path {
  fill: none;
  stroke: #000;
  stroke-width: 8;
}
.wire .zig {
  stroke-width: 9;
  stroke-linejoin: round;
}
.wire .plate {
  stroke-width: 9;
}
.wire .sign {
  stroke: #1a1a1a;
  stroke-width: 4;
}
.flow-orange {
  fill: #b8622b;
  stroke: #24170f;
  stroke-width: 3;
}
.flow-green {
  fill: #4fae5c;
  stroke: #41719c;
  stroke-width: 3;
}
.flow-blue {
  fill: #4f71be;
  stroke: #3c5a9c;
  stroke-width: 2;
}
.label {
  fill: #000;
  stroke: #000;
  font-family: Lato, sans-serif;
  font-size: 62px;
  font-weight: 400;
}
.label .sub {
  font-size: 40px;
}
.current {
  font-family: "Liberation Serif", serif;
  font-size: 72px;
  font-weight: 400;
  stroke-width: 2;
}
.current .sub {
  font-size: 46px;
}
.current .orange { fill: #c0692f; stroke: #c0692f; }
.current .green { fill: #56b35f; stroke: #56b35f; }
.current .blue { fill: #3a7cc4; stroke: #3a7cc4; }

/* windows behind the browser */
.behind {
  display: flex;
  flex: none;
  height: 156px;
  overflow: hidden;
}
.sidebar {
  width: 54px;
  border-right: 2px solid #6a6a6a;
  background: #262626;
}
.files {
  width: 489px;
  margin: 0;
  padding: 5px 0 0 34px;
  box-sizing: border-box;
  border-right: 2px solid #3a3a3a;
  background: #171717;
  list-style: none;
  color: #e6e6e6;
}
.files li {
  display: flex;
  align-items: center;
  gap: 13px;
  height: 44px;
}
.file-icon {
  width: 28px;
  height: 30px;
}
.files .faded {
  color: #9a9a9a;
}
.preview-pane {
  display: flex;
  align-items: flex-end;
  width: 1064px;
  padding-left: 20px;
  margin-bottom: -14px;
  box-sizing: border-box;
  border-right: 2px solid #b0b0b0;
  background: #1b1b1b;
  color: #a0a0a0;
}
.vineyard {
  flex: 1;
  height: 156px;
}

/* dock */
.dock {
  position: absolute;
  bottom: 10px;
  left: 50%;
  display: flex;
  align-items: flex-start;
  gap: 30px;
  padding: 19px 19px 29px;
  border: 2px solid #b7b7b7;
  border-radius: 50px;
  background: #0f0f0f;
  box-shadow: 0 0 80px rgba(0, 0, 0, .3);
  transform: translateX(-50%);
}
.app {
  position: relative;
  display: flex;
  align-items: center;
  justify-content: center;
  width: 90px;
  height: 90px;
}
.app-icon {
  width: 90px;
  height: 90px;
  overflow: visible;
}
.app.big .app-icon {
  width: 106px;
  height: 108px;
}
.app.wide .app-icon {
  width: 96px;
  height: 96px;
}
.petal {
  mix-blend-mode: multiply;
}
.badge {
  position: absolute;
  top: -10px;
  right: -14px;
  width: 42px;
  height: 42px;
  border-radius: 50%;
  background: #e24d3f;
  font-weight: 400;
  line-height: 42px;
}
.dot {
  position: absolute;
  left: 41px;
  bottom: -27px;
  width: 8px;
  height: 8px;
  border-radius: 50%;
  background: #949494;
}
.dock-sep {
  width: 2px;
  height: 106px;
  margin: -3px 10px -20px 12px;
  background: #4a4a4a;
}
</style>
